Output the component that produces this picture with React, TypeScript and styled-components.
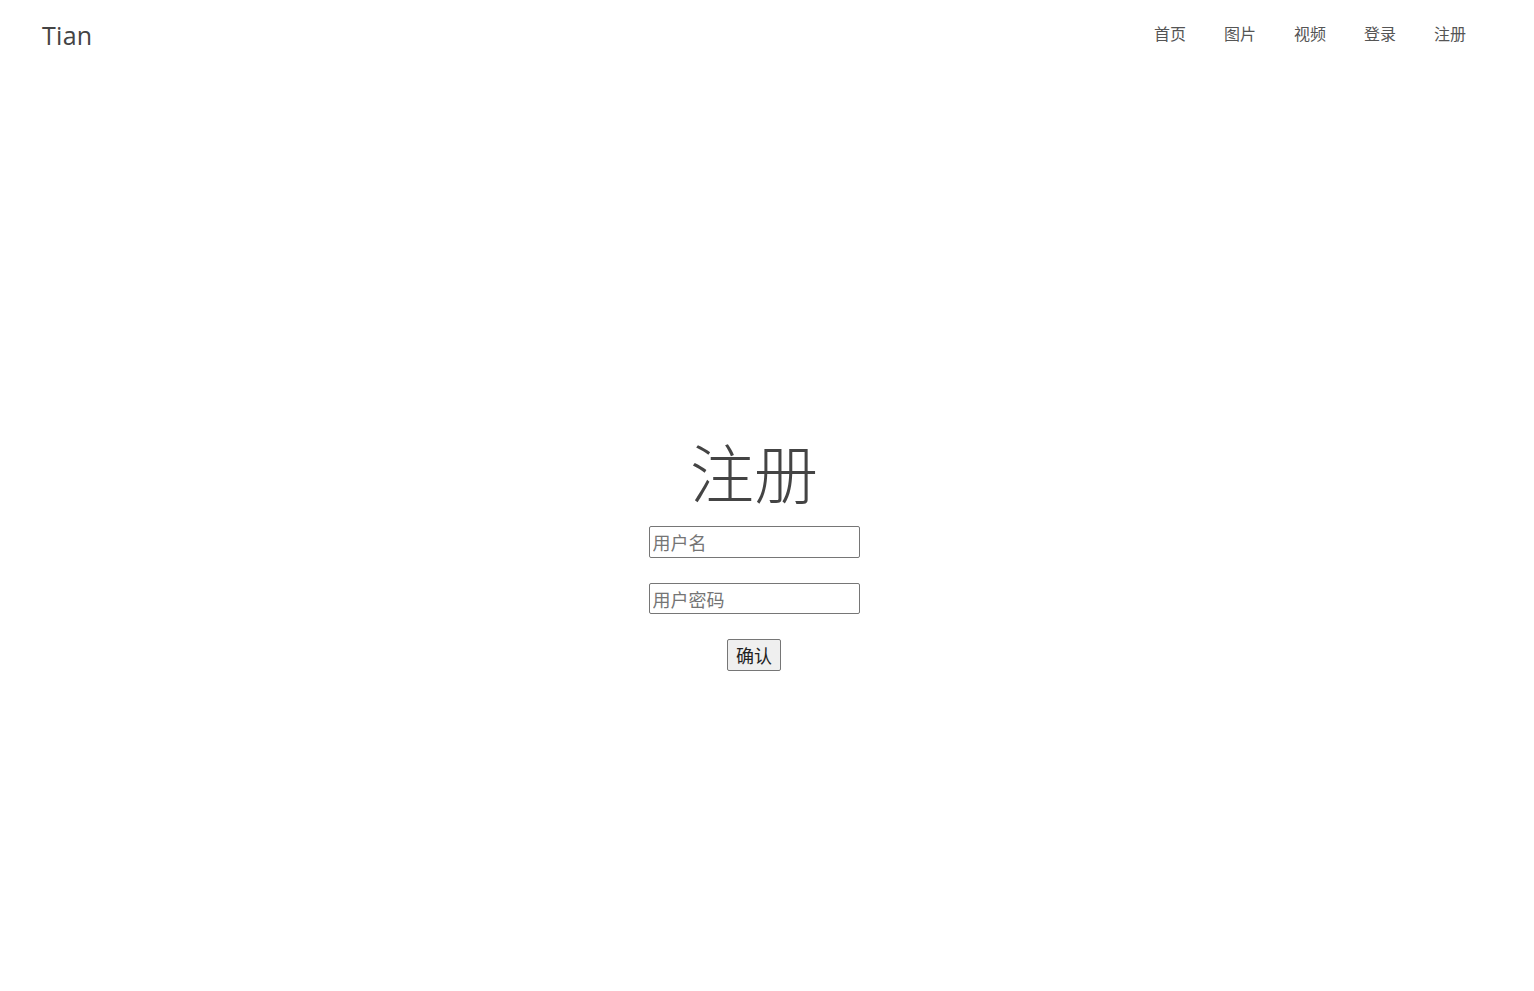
import React from "react";
import styled, { createGlobalStyle } from "styled-components";

const GlobalStyle = createGlobalStyle`
  html, body { margin: 0; padding: 0; background: #fff; }
  body { font-family: "Noto Sans", "Noto Sans CJK SC", sans-serif; color: #444; }
`;

const Header = styled.header`
  height: 70px;
  display: flex;
  align-items: center;
  justify-content: space-between;
  padding: 0 49px 0 42px;
`;

const Logo = styled.div`
  font-family: "Open Sans", "Noto Sans CJK SC", sans-serif;
  font-size: 25px;
  color: #444;
  letter-spacing: 0.3px;
  margin-top: -1px;
`;

const Nav = styled.nav`
  display: flex;
  align-items: center;
  margin-top: -4px;
`;

const NavItem = styled.a`
  font-family: "Noto Sans CJK SC", sans-serif;
  font-size: 16px;
  color: #555;
  padding: 0 19px;
  text-decoration: none;
  cursor: pointer;
`;

const Main = styled.main`
  display: flex;
  flex-direction: column;
  align-items: center;
  padding: 360px 26px 0 0;
`;

const Title = styled.h1`
  margin: 0;
  font-family: "Noto Sans CJK SC", sans-serif;
  font-weight: 300;
  font-size: 64px;
  line-height: 80px;
  color: #444;
`;

const Form = styled.form`
  display: flex;
  flex-direction: column;
  align-items: center;
  margin-top: 16px;
`;

const Input = styled.input<{ $height?: number }>`
  box-sizing: border-box;
  width: 211px;
  height: ${(p) => p.$height ?? 32}px;
  margin-bottom: 25px;
  padding: 1px 3px;
  border: 1px solid #767676;
  border-radius: 2px;
  font-family: "Noto Sans CJK SC", sans-serif;
  font-size: 18px;
  color: #333;
  &::placeholder { color: #757575; }
`;

const Button = styled.button`
  box-sizing: border-box;
  width: 54px;
  height: 32px;
  padding: 0;
  border: 1px solid #767676;
  border-radius: 2px;
  background: #efefef;
  font-family: "Noto Sans CJK SC", sans-serif;
  font-size: 18px;
  color: #222;
`;

const navItems = ["首页", "图片", "视频", "登录", "注册"];

export default function App() {
  return (
    <>
      <GlobalStyle />
      <Header>
        <Logo>Tian</Logo>
        <Nav>
          {navItems.map((t) => (
            <NavItem key={t}>{t}</NavItem>
          ))}
        </Nav>
      </Header>
      <Main>
        <Title>注册</Title>
        <Form onSubmit={(e) => e.preventDefault()}>
          <Input placeholder="用户名" />
          <Input placeholder="用户密码" $height={31} />
          <Button type="submit">确认</Button>
        </Form>
      </Main>
    </>
  );
}
